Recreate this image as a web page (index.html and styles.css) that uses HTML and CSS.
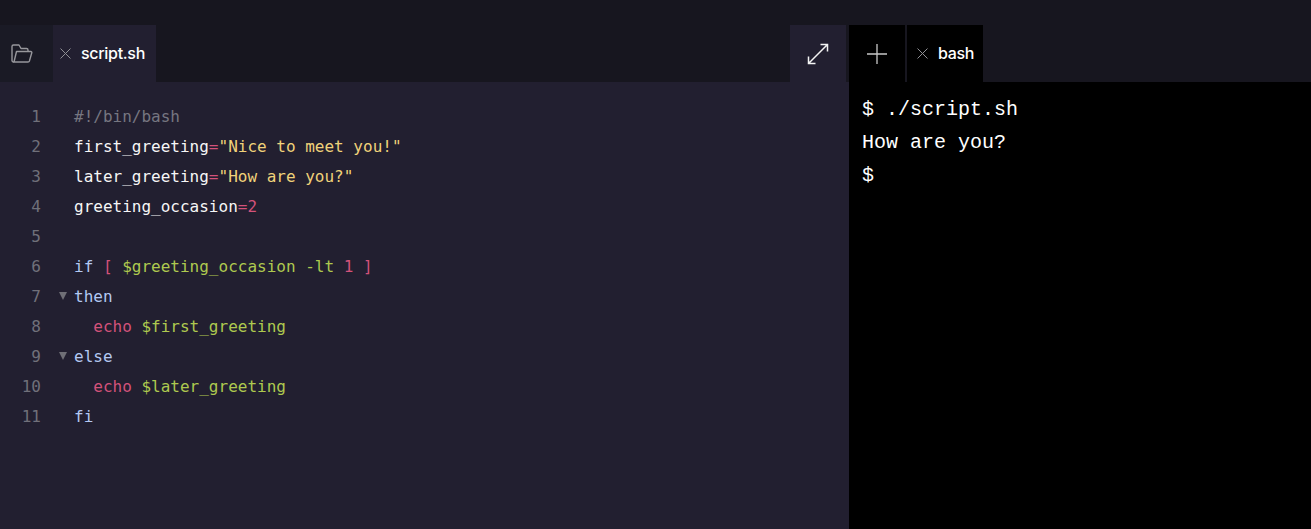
FILE: index.html
```html
<!DOCTYPE html>
<html lang="en">
<head>
<meta charset="utf-8">
<title>script.sh</title>
<link rel="stylesheet" href="styles.css">
</head>
<body>
<div class="topstrip"></div>
<main class="workspace">
  <section class="editor">
    <div class="tabbar">
      <button class="folder" aria-label="Open files">
        <svg width="22" height="20" viewBox="0 0 22 20" fill="none" stroke="#97979c" stroke-width="1.4" stroke-linejoin="round"><path d="M3 18H2.5A1.5 1.5 0 0 1 1 16.500V2.500A1.500 1.500 0 0 1 2.500 1H8l2 3.500h5.500A1.500 1.500 0 0 1 17 6V7.500"/><path d="M5.500 7.500H19.800a1 1 0 0 1 1 1.300L18.400 17a1.500 1.500 0 0 1-1.400 1H3Z"/></svg>
      </button>
      <div class="tab tab-script">
        <svg class="close" width="11" height="11" viewBox="0 0 11 11" stroke="#8f8f94" stroke-width="1"><path d="M.5.5l10 10M10.500.5l-10 10"/></svg>
        <span class="tab-name">script.sh</span>
      </div>
      <div class="spacer"></div>
      <button class="expand" aria-label="Expand">
        <svg width="22" height="22" viewBox="0 0 22 22" fill="none" stroke="#f4f4f4" stroke-width="1.5"><path d="M1.500 20.500l19-19M13.500 1.500h7v7M1.500 13.500v7h7"/></svg>
      </button>
    </div>
    <div class="code">
      <div class="line"><span class="num">1</span><span class="fold"></span><span class="c-com">#!/bin/bash</span></div>
      <div class="line"><span class="num">2</span><span class="fold"></span><span class="c-var">first_greeting</span><span class="c-op">=</span><span class="c-str">"Nice to meet you!"</span></div>
      <div class="line"><span class="num">3</span><span class="fold"></span><span class="c-var">later_greeting</span><span class="c-op">=</span><span class="c-str">"How are you?"</span></div>
      <div class="line"><span class="num">4</span><span class="fold"></span><span class="c-var">greeting_occasion</span><span class="c-op">=2</span></div>
      <div class="line"><span class="num">5</span><span class="fold"></span></div>
      <div class="line"><span class="num">6</span><span class="fold"></span><span class="c-kw">if </span><span class="c-op">[ </span><span class="c-grn">$greeting_occasion -lt </span><span class="c-op">1 ]</span></div>
      <div class="line"><span class="num">7</span><span class="fold"><i class="tri"></i></span><span class="c-kw">then</span></div>
      <div class="line"><span class="num">8</span><span class="fold"></span><span class="c-op">  echo </span><span class="c-grn">$first_greeting</span></div>
      <div class="line"><span class="num">9</span><span class="fold"><i class="tri"></i></span><span class="c-kw">else</span></div>
      <div class="line"><span class="num">10</span><span class="fold"></span><span class="c-op">  echo </span><span class="c-grn">$later_greeting</span></div>
      <div class="line"><span class="num">11</span><span class="fold"></span><span class="c-kw">fi</span></div>
    </div>
  </section>
  <section class="terminal">
    <div class="tabbar term-tabbar">
      <button class="plus" aria-label="New terminal">
        <svg width="20" height="20" viewBox="0 0 20 20" stroke="#c8c8c8" stroke-width="1.300"><path d="M0 10h20M10 0v20"/></svg>
      </button>
      <div class="tab tab-bash">
        <svg class="close" width="11" height="11" viewBox="0 0 11 11" stroke="#8f8f94" stroke-width="1"><path d="M.5.5l10 10M10.500.5l-10 10"/></svg>
        <span class="tab-name">bash</span>
      </div>
    </div>
    <div class="output">
      <div class="out-line">$ ./script.sh</div>
      <div class="out-line">How are you?</div>
      <div class="out-line">$</div>
    </div>
  </section>
</main>
</body>
</html>
```
FILE: styles.css
```css
* { box-sizing: border-box; }
html, body { margin: 0; height: 100%; }
body {
  background: #17161f;
  display: flex;
  flex-direction: column;
  height: 529px;
  overflow: hidden;
}
button { border: 0; padding: 0; margin: 0; display: flex; align-items: center; justify-content: center; }
.topstrip { height: 25px; background: #17161f; flex: none; }
.workspace { flex: 1; display: flex; min-height: 0; }
.editor { width: 849px; flex: none; background: #221f30; display: flex; flex-direction: column; }
.terminal { flex: 1; background: #000; display: flex; flex-direction: column; }
.tabbar { height: 57px; flex: none; display: flex; background: #17161f; }
.folder { width: 53px; background: #1a1a25; padding-right: 9px; padding-top: 1px; }
.tab {
  display: flex;
  align-items: center;
  font-family: Inter, "Liberation Sans", sans-serif;
  font-size: 16px;
  font-weight: 500;
  letter-spacing: -0.3px;
  color: #fff;
}
.tab-name { padding-bottom: 2px; }
.tab-script { width: 103px; background: #221f30; padding-left: 7px; }
.tab-script .close { margin-right: 10px; }
.spacer { flex: 1; }
.expand { width: 56px; background: #221f30; margin-right: 3px; }
.term-tabbar { gap: 2px; background: #17161f; }
.plus { width: 56px; background: #000; }
.tab-bash { width: 76px; background: #000; padding-left: 10px; }
.tab-bash .close { margin-right: 10px; }
.code {
  padding-top: 20px;
  font-family: "DejaVu Sans Mono", monospace;
  font-size: 16px;
  line-height: 30px;
}
.line { display: flex; height: 30px; white-space: pre; }
.num { width: 41px; text-align: right; color: #70707a; flex: none; }
.fold { width: 33px; flex: none; position: relative; }
.tri {
  position: absolute;
  left: 18px;
  top: 10px;
  border-left: 4px solid transparent;
  border-right: 4px solid transparent;
  border-top: 8px solid #6f6f76;
}
.c-com { color: #767680; }
.c-var { color: #f6f6f6; }
.c-op { color: #d3527a; }
.c-str { color: #f0d27a; }
.c-kw { color: #b3c8f2; }
.c-grn { color: #aec94f; }
.output {
  padding: 11px 0 0 13px;
  font-family: "Liberation Mono", "Courier New", monospace;
  font-size: 20px;
  line-height: 33px;
  color: #fff;
}
.out-line { white-space: pre; height: 33px; }
```
